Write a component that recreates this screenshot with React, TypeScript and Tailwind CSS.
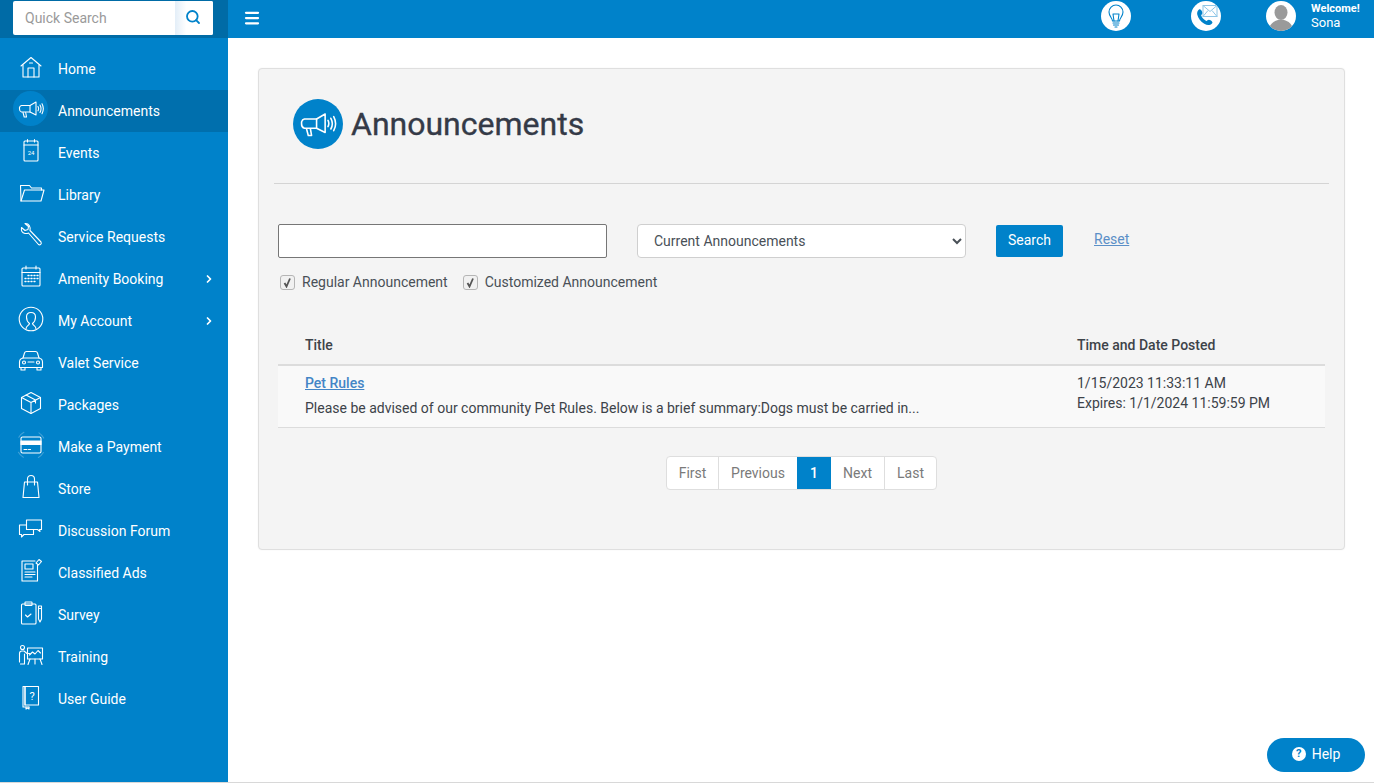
import { Search, Menu, ChevronRight } from "lucide-react";
import type { ReactNode } from "react";

const Ico = ({ children, w = 28, h = 28 }: { children: ReactNode; w?: number; h?: number }) => (
  <svg width={w} height={h} viewBox="0 0 28 28" fill="none" stroke="currentColor" strokeWidth="1.1" strokeLinecap="round" strokeLinejoin="round" overflow="visible">
    {children}
  </svg>
);

const Megaphone = ({ size = 28 }: { size?: number }) => (
  <svg width={size} height={size} viewBox="0 0 28 28" fill="none" stroke="currentColor" strokeWidth="1.1" strokeLinecap="round" strokeLinejoin="round">
    <path d="M4.5 10.5h8.5l6-3.5v13l-6-3h-8.500a2.500 3 0 0 1-2-3v-1.500a2.500 3 0 0 1 2-2z" />
    <path d="M13 10.500v6.500" />
    <path d="M6 17.500l1.200 4.500h2.300l-.8-4.500" />
    <path d="M21 11.500c.7 1.300.7 3 0 4.300M23 10c1.200 2.200 1.200 5.300 0 7.500M25 8.800c1.600 3 1.600 6.900 0 9.900" />
  </svg>
);

const icons: Record<string, ReactNode> = {
  Home: (
    <Ico>
      <path d="M4 13L14 4.500 24 13" />
      <path d="M6 12v12h16V12" />
      <path d="M11 24v-9h6v9M12.500 10h3" />
    </Ico>
  ),
  Events: (
    <Ico>
      <rect x="7" y="4" width="14" height="20" rx="1" />
      <path d="M7 8h14M10.500 2.500V5M17.500 2.500V5" />
      <text x="14" y="18" fontSize="6" fill="currentColor" stroke="none" textAnchor="middle" fontFamily="Roboto, sans-serif">24</text>
    </Ico>
  ),
  Library: (
    <Ico>
      <path d="M4 22L3.500 6.500h9l2 2.500h10v2" />
      <path d="M4 22h20l3-11H7.500z" />
    </Ico>
  ),
  "Service Requests": (
    <Ico>
      <path d="M8 2.500l3.500 3-.5 3-3 1-3.500-3c-.5 3 .5 5.500 3.500 6 1.500.2 2.500 0 3.500-.5l10 11.500c1.500 1 3.500-.5 2.500-2.500L13 9.500c.7-3.500-1-7.500-5-7z" />
    </Ico>
  ),
  "Amenity Booking": (
    <Ico>
      <rect x="5" y="5" width="18" height="18" rx="1" />
      <path d="M5 9.500h18M9 3v3M19 3v3" />
      <path d="M11 12.500h1M14 12.500h1M17 12.500h1M20 12.500h1M8 15.500h1M11 15.500h1M14 15.500h1M17 15.500h1M20 15.500h1M8 18.500h1M11 18.500h1M14 18.500h1M17 18.500h1" strokeWidth="1.400" />
    </Ico>
  ),
  "My Account": (
    <Ico>
      <circle cx="14" cy="14" r="11.800" />
      <path d="M9 24c0-3.500 2.800-3 3.500-5.500-2-1.500-3-4-3-6.500 0-3 2-4.500 4.500-4.500s4.500 1.500 4.500 4.500c0 2.500-1 5-3 6.500.7 2.500 3.500 2 3.500 5.500" />
    </Ico>
  ),
  "Valet Service": (
    <Ico>
      <path d="M6 11l1.500-5c.3-1 1-1.500 2-1.500h9c1 0 1.700.5 2 1.500l1.500 5" />
      <path d="M6 11h16c2 .5 3.500 2 3.500 4v5.500H2.500V15c0-2 1.500-3.500 3.500-4z" />
      <circle cx="7" cy="15.500" r="1.500" />
      <circle cx="21" cy="15.500" r="1.500" />
      <path d="M11 15h6M4 20.500v2.500h4v-2.500M20 20.500v2.500h4v-2.500" />
    </Ico>
  ),
  Packages: (
    <Ico>
      <path d="M14 3.500L23.500 8.500v11L14 24.500 4.500 19.500v-11z" />
      <path d="M4.500 8.500L14 13.500l9.500-5M14 13.500v11M9 6l9.500 5v3" />
    </Ico>
  ),
  "Make a Payment": (
    <Ico>
      <circle cx="14" cy="14" r="14.500" strokeOpacity="0.25" strokeDasharray="7 15.800" strokeDashoffset="-7.900" />
      <rect x="4" y="6" width="20" height="16" rx="1.500" />
      <path d="M4 10h20v3.500H4z" fill="currentColor" />
      <path d="M7 18.500h3M11.500 18.500h2" />
    </Ico>
  ),
  Store: (
    <Ico>
      <path d="M7.500 9h13l1.500 15.500H6z" />
      <path d="M10.500 12V6c0-2 1.500-3.500 3.500-3.500s3.500 1.500 3.500 3.500v6" />
    </Ico>
  ),
  "Discussion Forum": (
    <Ico>
      <path d="M9.500 5h15v9.500h-2l.5 2-2.500-2h-11z" />
      <path d="M9.500 10h-7v9.500h2v2.500l2.500-2.500h9.500v-5" />
    </Ico>
  ),
  "Classified Ads": (
    <Ico>
      <path d="M20.500 8v16H5V4h13" />
      <rect x="8" y="7" width="8" height="5" />
      <path d="M8 15h10M8 17.500h10M8 20h7" />
      <path d="M19 6l3-3.500 2.500 2-3 3.500z" />
    </Ico>
  ),
  Survey: (
    <Ico>
      <rect x="4.500" y="5" width="14.500" height="20" rx="1" />
      <rect x="8" y="3" width="7" height="3.500" rx=".5" />
      <path d="M8.500 16l2 2 3.500-3" />
      <path d="M21.500 7h3v13l-1.500 3-1.500-3zM21.500 9.500h3" />
    </Ico>
  ),
  Training: (
    <Ico>
      <circle cx="5.500" cy="6.500" r="2" />
      <path d="M2.500 21V12.500c0-1.500 1-2.500 2.500-2.500h2l3 2.500 3 0M3.500 23h4v-10" />
      <rect x="10.500" y="7" width="15" height="11" />
      <path d="M12.500 14l3-3 2.500 2 3-3.500 2.500 2.500M13 18l-2 5.500M23 18l2 5.500M18 18v5" />
    </Ico>
  ),
  "User Guide": (
    <Ico>
      <path d="M8 3.500h13.500v18.500H8zM8 3.500H6v20.500h6" />
      <path d="M8 3.500v18.500" />
      <path d="M9 24v2l1.500-1 1.500 1v-2" />
      <text x="15" y="17" fontSize="11" fill="currentColor" stroke="none" textAnchor="middle" fontFamily="Roboto, sans-serif">?</text>
    </Ico>
  ),
};

const navItems = [
  "Home",
  "Announcements",
  "Events",
  "Library",
  "Service Requests",
  "Amenity Booking",
  "My Account",
  "Valet Service",
  "Packages",
  "Make a Payment",
  "Store",
  "Discussion Forum",
  "Classified Ads",
  "Survey",
  "Training",
  "User Guide",
];

const pages = [
  { label: "First", cls: "w-[52px] border-r border-[#dedede]" },
  { label: "Previous", cls: "w-[78px]" },
  { label: "1", cls: "w-[34px] bg-[#0082ca] font-medium text-white" },
  { label: "Next", cls: "w-[54px] border-r border-[#dedede]" },
  { label: "Last", cls: "w-[51px]" },
];

function Sidebar() {
  return (
    <aside className="w-[228px] shrink-0 bg-[#0082ca] text-white">
      <div className="h-[38px] bg-[#006ba6] pl-[13px] pt-px">
        <div className="flex h-[34px] w-[200px] overflow-hidden rounded-[2px] bg-white">
          <span className="flex-1 pl-3 text-[14px] leading-[34px] text-[#9a9a9a]">Quick Search</span>
          <span className="flex w-[38px] items-center justify-center bg-gradient-to-r from-[#e3eef8] to-white to-30% pb-[3px] pr-[3px]">
            <Search size={16} strokeWidth={2.75} className="text-[#0082ca]" />
          </span>
        </div>
      </div>
      <nav className="pt-[10px]">
        {navItems.map((item) => (
          <div key={item} className={`flex h-[42px] items-center ${item === "Announcements" ? "bg-[#006fad]" : ""}`}>
            <span className="flex w-[58px] shrink-0 items-center justify-center pb-[5px] pl-[3px]">
              {item === "Announcements" ? (
                <span className="flex h-[35px] w-[35px] items-center justify-center rounded-full bg-[#0082ca]">
                  <Megaphone size={28} />
                </span>
              ) : (
                icons[item]
              )}
            </span>
            <span className="flex-1 text-[14px]">{item}</span>
            {(item === "Amenity Booking" || item === "My Account") && (
              <ChevronRight size={12} strokeWidth={3.500} className="mr-[13px]" />
            )}
          </div>
        ))}
      </nav>
    </aside>
  );
}

function TopBar() {
  return (
    <header className="flex h-[38px] items-start bg-[#0082ca] text-white">
      <Menu size={18} strokeWidth={3} className="ml-[15px] mt-[9px]" />
      <div className="ml-auto flex items-start pt-px">
        <span className="flex h-[30px] w-[30px] items-center justify-center rounded-full bg-white text-[#0082ca]">
          <svg width="22" height="24" viewBox="0 0 22 24" fill="none" stroke="currentColor" strokeWidth="1.1" strokeLinecap="round" strokeLinejoin="round">
            <path d="M7.500 17c0-3-3.500-4.500-3.500-9a7 7 0 0 1 14 0c0 4.500-3.500 6-3.500 9z" />
            <path d="M9 17l-1-7M13 17l1-7M8 10h6M8 19h6M8.500 21h5M10 23h2" />
          </svg>
        </span>
        <span className="relative ml-[60px] block h-[30px] w-[30px] overflow-hidden rounded-full bg-white">
          <svg width="30" height="30" viewBox="0 0 30 30">
            <path d="M8 8.500c1.200-.8 2.200.2 3 2 .8 1.600.6 2.300-.5 3.200-.4.300-.4.800-.1 1.400 1 2 2.600 3.700 4.500 4.700.6.300 1 .2 1.300-.2.900-1.100 1.900-1.300 3.300-.4 1.700 1.100 2.600 2.200 1.500 3.300-2 2-4.700 2.100-7.700.3-3.600-2.100-6.200-5.500-7-9-.5-2.300.2-4.300 1.700-5.300z" fill="#0082ca" />
            <rect x="12" y="4.500" width="14" height="11" fill="#fff" stroke="#8fc6e6" strokeWidth="1" />
            <path d="M12 4.500l7 6 7-6M12 15.500l5-6M26 15.500l-5-6" fill="none" stroke="#8fc6e6" strokeWidth="1" />
          </svg>
        </span>
        <span className="ml-[45px] block h-[30px] w-[30px] overflow-hidden rounded-full bg-white">
          <svg width="30" height="30" viewBox="0 0 30 30" fill="#9a9a9a">
            <ellipse cx="15" cy="11.500" rx="6.500" ry="7.500" />
            <path d="M3 30c0-7 5-10 9-11h6c4 1 9 4 9 11z" />
          </svg>
        </span>
        <div className="ml-[15px] w-[63px] pt-px text-[13px] leading-[14px]">
          <div className="text-[11px] font-bold">Welcome!</div>
          <div>Sona</div>
        </div>
      </div>
    </header>
  );
}

function Checkbox({ label }: { label: string }) {
  return (
    <label className="flex items-center">
      <span className="flex h-[15px] w-[15px] items-center justify-center rounded-[3px] border border-[#b5b5b5] bg-[#f1f1f1]">
        <svg width="11" height="11" viewBox="0 0 11 11" fill="none" stroke="#555" strokeWidth="1.800">
          <path d="M2.500 6l2 3.500L8 1.500" />
        </svg>
      </span>
      <span className="ml-[7px] text-[14px] text-[#495057]">{label}</span>
    </label>
  );
}

export default function App() {
  return (
    <div className="flex h-[783px] overflow-hidden border-b border-[#d8d8d8] bg-white font-['Roboto',sans-serif]">
      <Sidebar />
      <div className="flex-1">
        <TopBar />
        <main className="pl-[30px] pr-[29px] pt-[30px]">
          <section className="h-[482px] rounded-[4px] border border-[#dfdfdf] bg-[#f4f4f4] px-[15px] shadow-[0_0_2px_rgba(0,0,0,0.06)]">
            <div className="flex h-[115px] items-start border-b border-[#d4d4d4] pl-[19px] pt-[30px]">
              <span className="flex h-[50px] w-[50px] items-center justify-center rounded-full bg-[#0082ca] text-white">
                <Megaphone size={40} />
              </span>
              <h1 className="ml-2 text-[32px] leading-[50px] font-normal text-[#343a47] [-webkit-text-stroke:0.35px_#343a47]">Announcements</h1>
            </div>

            <div className="flex items-start pl-[4px] pt-[40px]">
              <input className="h-[34px] w-[329px] rounded-[2px] border border-[#767676] bg-white" />
              <select defaultValue="current" className="ml-[30px] h-[34px] w-[329px] rounded-[4px] border border-[#cfcfcf] bg-white pl-[12px] text-[14px] text-[#495057]">
                <option value="current">Current Announcements</option>
              </select>
              <button className="ml-[30px] mt-px h-[32px] w-[67px] rounded-[2px] bg-[#0082ca] pb-[2px] text-[14px] text-white">Search</button>
              <a href="#" className="ml-[31px] mt-[5px] text-[14px] text-[#5b8fc7] underline">Reset</a>
            </div>

            <div className="flex gap-[15px] pl-[6px] pt-[14px]">
              <Checkbox label="Regular Announcement" />
              <Checkbox label="Customized Announcement" />
            </div>

            <div className="mx-[4px] mt-[34px] text-[14px] text-[#3d4349]">
              <div className="flex h-[39px] items-center border-b-2 border-[#dcdcdc] font-medium">
                <div className="flex-1 pl-[27px]">Title</div>
                <div className="w-[248px]">Time and Date Posted</div>
              </div>
              <div className="flex h-[62px] items-start border-b border-[#dcdcdc] bg-[#f9f9f9]">
                <div className="flex-1 pl-[27px] pt-[5px] leading-[25px]">
                  <a href="#" className="font-medium text-[#4385c6] underline">Pet Rules</a>
                  <div>Please be advised of our community Pet Rules. Below is a brief summary:Dogs must be carried in...</div>
                </div>
                <div className="w-[248px] pt-[7px] leading-[20px]">
                  <div>1/15/2023 11:33:11 AM</div>
                  <div>Expires: 1/1/2024 11:59:59 PM</div>
                </div>
              </div>
            </div>

            <div className="mt-[28px] flex justify-center">
              <div className="flex h-[34px] overflow-hidden rounded-[4px] border border-[#dedede] bg-white text-[14px] text-[#7a7a7a]">
                {pages.map((p) => (
                  <span key={p.label} className={`flex items-center justify-center ${p.cls}`}>
                    {p.label}
                  </span>
                ))}
              </div>
            </div>
          </section>
        </main>
      </div>
      <button className="fixed left-[1267px] top-[738px] flex h-[34px] w-[98px] items-center justify-center gap-[6px] rounded-full bg-[#0082ca] pb-[2px] text-[14px] text-white">
        <span className="flex h-[14px] w-[14px] items-center justify-center rounded-full bg-white text-[11px] font-bold text-[#0082ca]">?</span>
        Help
      </button>
    </div>
  );
}
